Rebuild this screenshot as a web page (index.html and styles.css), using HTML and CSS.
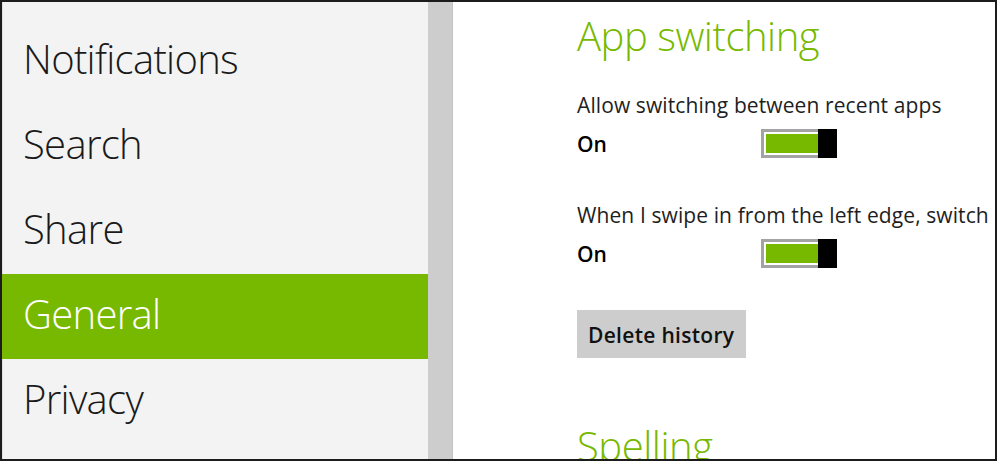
FILE: index.html
```html
<!DOCTYPE html>
<html lang="en">
<head>
<meta charset="utf-8">
<title>PC settings - General</title>
<link rel="stylesheet" href="styles.css">
</head>
<body>
<div class="frame">
  <nav class="sidebar">
    <div class="nav-item">Notifications</div>
    <div class="nav-item">Search</div>
    <div class="nav-item">Share</div>
    <div class="nav-item active">General</div>
    <div class="nav-item">Privacy</div>
  </nav>
  <div class="scrollbar"></div>
  <main class="content">
    <h2 class="section-title">App switching</h2>
    <div class="setting">
      <div class="setting-label">Allow switching between recent apps</div>
      <div class="toggle-row">
        <span class="state">On</span>
        <div class="toggle"><span class="track"><span class="fill"></span></span><span class="thumb"></span></div>
      </div>
    </div>
    <div class="setting">
      <div class="setting-label">When I swipe in from the left edge, switch directly to my most recent app</div>
      <div class="toggle-row">
        <span class="state">On</span>
        <div class="toggle"><span class="track"><span class="fill"></span></span><span class="thumb"></span></div>
      </div>
    </div>
    <button class="btn">Delete history</button>
    <h2 class="section-title spelling">Spelling</h2>
  </main>
</div>
</body>
</html>
```
FILE: styles.css
```css
html, body {
  margin: 0;
  padding: 0;
  background: #ffffff;
}

body {
  width: 1000px;
  height: 463px;
  overflow: hidden;
  font-family: "Open Sans", "Noto Sans", sans-serif;
}

.frame {
  box-sizing: border-box;
  width: 997px;
  height: 461px;
  border: 2px solid #1c1c1c;
  display: flex;
  overflow: hidden;
  background: #ffffff;
}

.sidebar {
  width: 426px;
  flex: none;
  background: #f3f3f3;
  padding-top: 17px;
  box-shadow: inset 1px 0 0 #e0e0e0;
}

.nav-item {
  box-sizing: border-box;
  height: 85px;
  line-height: 79px;
  padding: 0 0 6px 21px;
  font-size: 40px;
  font-weight: 300;
  letter-spacing: -0.7px;
  color: #1a1a1a;
  white-space: nowrap;
}

.nav-item.active {
  background: #77b900;
  color: #ffffff;
}

.scrollbar {
  width: 25px;
  flex: none;
  background: #cdcdcd;
  box-shadow: inset -1px 0 0 #c4c4c4;
}

.content {
  flex: 1;
  min-width: 0;
  padding: 7px 0 0 124px;
  white-space: nowrap;
  overflow: hidden;
}

.section-title {
  margin: 0;
  font-size: 40px;
  line-height: 54px;
  font-weight: 300;
  letter-spacing: -0.45px;
  color: #77b900;
}

.setting {
  margin-top: 29px;
}

.setting + .setting {
  margin-top: 44px;
}

.setting-label {
  font-size: 21px;
  line-height: 27px;
  letter-spacing: 0.1px;
  color: #1e1e1e;
}

.toggle-row {
  display: flex;
  align-items: flex-start;
  margin-top: 10px;
  height: 29px;
}

.state {
  width: 184px;
  flex: none;
  font-size: 21px;
  line-height: 27px;
  margin-top: 2px;
  font-weight: 600;
  color: #000000;
}

.toggle {
  display: flex;
  width: 76px;
  height: 29px;
}

.track {
  flex: 1;
  box-sizing: border-box;
  border: 3px solid #a3a3a3;
  border-right: 0;
  padding: 2px 0 2px 2px;
  background: #ffffff;
  display: flex;
}

.fill {
  flex: 1;
  background: #77b900;
}

.thumb {
  width: 19px;
  flex: none;
  background: #000000;
}

.btn {
  display: block;
  box-sizing: border-box;
  margin-top: 42px;
  width: 169px;
  height: 48px;
  padding: 2px 0 0 11px;
  border: 0;
  background: #cdcdcd;
  font-family: "Open Sans", "Noto Sans", sans-serif;
  font-size: 21px;
  line-height: 46px;
  font-weight: 600;
  letter-spacing: 0.3px;
  color: #111111;
  text-align: left;
  white-space: nowrap;
}

.spelling {
  margin-top: 61px;
}
```
